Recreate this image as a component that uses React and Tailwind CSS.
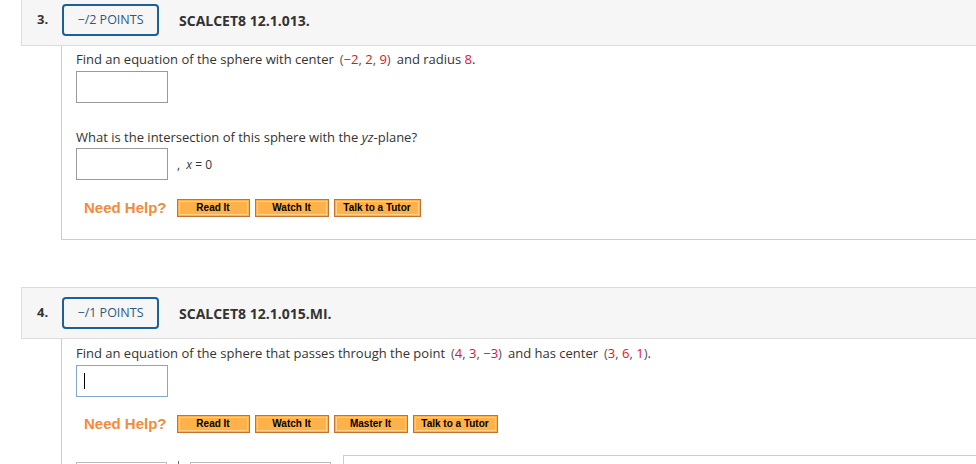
import React from 'react';

const font = { fontFamily: '"Open Sans", "Noto Sans", sans-serif' };

const HelpButton = ({ label, width }) => (
  <div className={`h-[18px] ${width} border border-[#c8712c] bg-[#ffb24a] p-px`}>
    <div className="h-full w-full border border-[#ffd28e] flex items-center justify-center text-[10px] font-bold text-black leading-none font-['Liberation_Sans',Arial,sans-serif]">
      {label}
    </div>
  </div>
);

const NeedHelp = ({ buttons }) => (
  <div className="flex items-center h-[22px] pl-[8px]">
    <span className="text-[15px] font-bold text-[#f38b3c] font-['Liberation_Sans',Arial,sans-serif] mr-[10px]">
      Need Help?
    </span>
    <div className="flex gap-[5px]">
      {buttons.map((b) => (
        <HelpButton key={b.label} label={b.label} width={b.width} />
      ))}
    </div>
  </div>
);

const Header = ({ num, points, title, className = '' }) => (
  <div className={`flex items-center h-[52px] bg-[#f6f6f6] border-t border-b border-l border-[#dcdcdc] ${className}`}>
    <span className="w-[40px] pl-[15px] text-[13px] font-bold text-[#333]">{num}</span>
    <div className="w-[97px] h-[32px] border-2 border-[#1b6198] rounded-[4px] flex items-center justify-center text-[12.5px] text-[#2b5a80]">
      {points}
    </div>
    <span className="ml-[20px] text-[14px] font-bold text-[#333]">{title}</span>
  </div>
);

const Num = ({ children }) => <span className="text-[#e4112c]">{children}</span>;

const Input = ({ active }) => (
  <div className={`w-[92px] h-[32px] border ${active ? 'border-[#7fa8d2]' : 'border-[#9a9a9a]'} bg-white flex items-center pl-[7px]`}>
    {active && <div className="w-px h-[16px] bg-black" />}
  </div>
);

export default function App() {
  return (
    <div className="w-[976px] h-[464px] overflow-hidden bg-white text-[#333]" style={font}>
      <div className="pl-[21px]">
        <Header num="3." points="−/2 POINTS" title="SCALCET8 12.1.013." className="-mt-[6px]" />
        <div className="ml-[40px] border-l border-b border-[#cccccc] pl-[14px] pt-[4px] pb-[20px]">
          <p className="text-[13px] leading-[18px]">
            Find an equation of the sphere with center
            <span className="mx-[6px] text-[#555]">(<Num>−2</Num>, <Num>2</Num>, <Num>9</Num>)</span>
            and radius <Num>8</Num>.
          </p>
          <div className="mt-[3px]"><Input /></div>
          <p className="mt-[25px] text-[13px] leading-[18px]">
            What is the intersection of this sphere with the <i>yz</i>-plane?
          </p>
          <div className="mt-[2px] flex items-center">
            <Input />
            <span className="ml-[9px] text-[12px] mt-[2px]">, &nbsp;<i>x</i> = 0</span>
          </div>
          <div className="mt-[17px]">
            <NeedHelp
              buttons={[
                { label: 'Read It', width: 'w-[73px]' },
                { label: 'Watch It', width: 'w-[74px]' },
                { label: 'Talk to a Tutor', width: 'w-[87px]' },
              ]}
            />
          </div>
        </div>

        <div className="h-[47px]" />

        <Header num="4." points="−/1 POINTS" title="SCALCET8 12.1.015.MI." />
        <div className="ml-[40px] border-l border-[#cccccc] pl-[14px] pt-[5px] h-[200px]">
          <p className="text-[13px] leading-[18px]">
            Find an equation of the sphere that passes through the point
            <span className="mx-[6px] text-[#555]">(<Num>4</Num>, <Num>3</Num>, <Num>−3</Num>)</span>
            and has center
            <span className="ml-[6px] text-[#555]">(<Num>3</Num>, <Num>6</Num>, <Num>1</Num>)</span>.
          </p>
          <div className="mt-[3px]"><Input active /></div>
          <div className="mt-[16px]">
            <NeedHelp
              buttons={[
                { label: 'Read It', width: 'w-[73px]' },
                { label: 'Watch It', width: 'w-[74px]' },
                { label: 'Master It', width: 'w-[74px]' },
                { label: 'Talk to a Tutor', width: 'w-[85px]' },
              ]}
            />
          </div>
          <div className="mt-[20px] flex items-start">
            <div className="mt-[7px] w-[91px] h-[30px] border border-[#bbbbbb]" />
            <div className="ml-[11px] mt-[6px] w-px h-[4px] bg-[#666]" />
            <div className="ml-[11px] mt-[7px] w-[141px] h-[30px] border border-[#bbbbbb]" />
            <div className="ml-[12px] flex-1 h-[30px] border-t border-l border-[#cccccc]" />
          </div>
        </div>
      </div>
    </div>
  );
}
